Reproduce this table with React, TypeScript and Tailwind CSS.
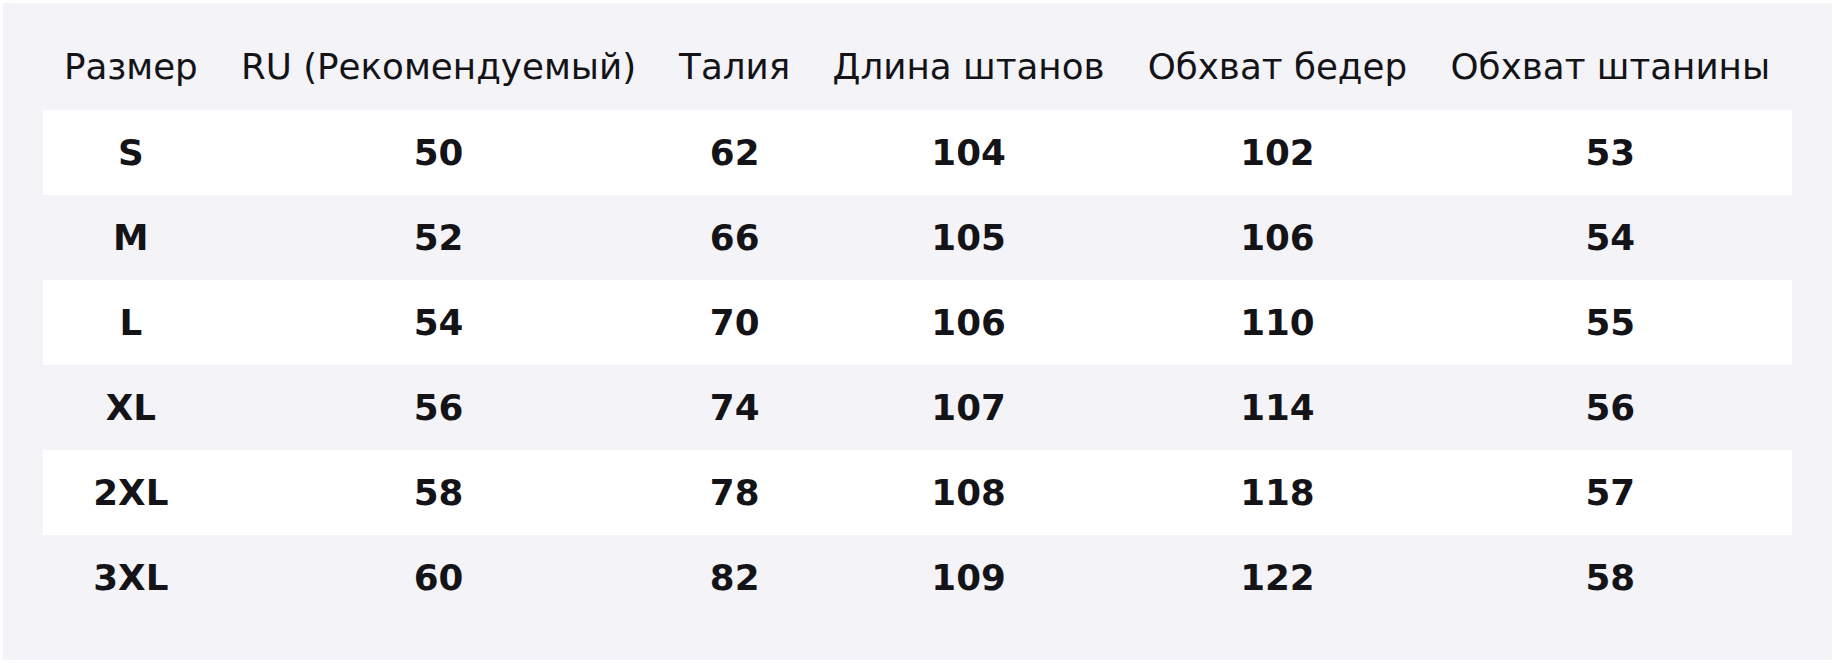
const headers = ['Размер', 'RU (Рекомендуемый)', 'Талия', 'Длина штанов', 'Обхват бедер', 'Обхват штанины']

const rows = [
  ['S', '50', '62', '104', '102', '53'],
  ['M', '52', '66', '105', '106', '54'],
  ['L', '54', '70', '106', '110', '55'],
  ['XL', '56', '74', '107', '114', '56'],
  ['2XL', '58', '78', '108', '118', '57'],
  ['3XL', '60', '82', '109', '122', '58'],
]

export default function App() {
  return (
    <div className="bg-white p-[3px] w-[1835px] h-[663px]">
      <div className="h-full bg-[#f3f3f8] px-10 pt-10 pb-[42px] font-['DejaVu_Sans',sans-serif] text-[#131318]">
        <table className="w-full border-collapse">
          <thead>
            <tr className="h-[67px]">
              {headers.map((h) => (
                <th key={h} className="px-5 pb-5 text-[35.7px] leading-none font-normal text-center whitespace-nowrap">
                  {h}
                </th>
              ))}
            </tr>
          </thead>
          <tbody>
            {rows.map((r, i) => (
              <tr key={r[0]} className={`h-[85px] ${i % 2 === 0 ? 'bg-white' : ''}`}>
                {r.map((c, j) => (
                  <td key={j} className="px-5 text-[35.7px] leading-none font-bold text-center">
                    {c}
                  </td>
                ))}
              </tr>
            ))}
          </tbody>
        </table>
      </div>
    </div>
  )
}
